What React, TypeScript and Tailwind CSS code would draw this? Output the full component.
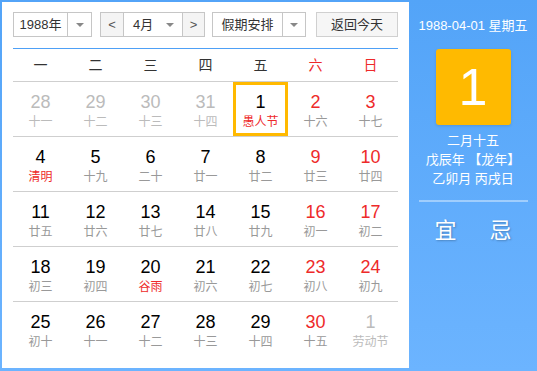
import React from "react";

type Day = {
  d: number;
  l: string;
  other?: boolean;
  red?: boolean;
  fest?: boolean;
  sel?: boolean;
};

const weekdays = ["一", "二", "三", "四", "五", "六", "日"];

const weeks: Day[][] = [
  [
    { d: 28, l: "十一", other: true },
    { d: 29, l: "十二", other: true },
    { d: 30, l: "十三", other: true },
    { d: 31, l: "十四", other: true },
    { d: 1, l: "愚人节", fest: true, sel: true },
    { d: 2, l: "十六", red: true },
    { d: 3, l: "十七", red: true },
  ],
  [
    { d: 4, l: "清明", fest: true },
    { d: 5, l: "十九" },
    { d: 6, l: "二十" },
    { d: 7, l: "廿一" },
    { d: 8, l: "廿二" },
    { d: 9, l: "廿三", red: true },
    { d: 10, l: "廿四", red: true },
  ],
  [
    { d: 11, l: "廿五" },
    { d: 12, l: "廿六" },
    { d: 13, l: "廿七" },
    { d: 14, l: "廿八" },
    { d: 15, l: "廿九" },
    { d: 16, l: "初一", red: true },
    { d: 17, l: "初二", red: true },
  ],
  [
    { d: 18, l: "初三" },
    { d: 19, l: "初四" },
    { d: 20, l: "谷雨", fest: true },
    { d: 21, l: "初六" },
    { d: 22, l: "初七" },
    { d: 23, l: "初八", red: true },
    { d: 24, l: "初九", red: true },
  ],
  [
    { d: 25, l: "初十" },
    { d: 26, l: "十一" },
    { d: 27, l: "十二" },
    { d: 28, l: "十三" },
    { d: 29, l: "十四" },
    { d: 30, l: "十五", red: true },
    { d: 1, l: "劳动节", other: true },
  ],
];

const Caret = () => (
  <span className="block w-0 h-0 border-l-[4px] border-r-[4px] border-t-[4px] border-l-transparent border-r-transparent border-t-[#888]" />
);

const Calendar: React.FC = () => {
  return (
    <div
      className="w-[537px] h-[371px] flex pt-[2px] pb-[3px] pl-[2px] bg-gradient-to-b from-[#53a4f8] to-[#6cb4ff] text-[#333]"
      style={{ fontFamily: '"Liberation Sans", "Noto Sans CJK SC", sans-serif' }}
    >
      {/* left: month grid */}
      <div className="w-[407px] h-full bg-white pl-[11px] pr-[11px] pt-[10px]">
        <div className="flex items-center h-[25px] text-[13px]">
          <div className="flex h-full w-[79px] border border-[#c6c6c6]">
            <div className="flex-1 flex items-center justify-center">1988年</div>
            <div className="w-[24px] flex items-center justify-center border-l border-[#c6c6c6]">
              <Caret />
            </div>
          </div>
          <div className="flex h-full w-[105px] ml-[8px] border border-[#c6c6c6]">
            <div className="w-[23px] flex items-center justify-center bg-[#f4f4f4] border-r border-[#c6c6c6] text-[#555]">
              &lt;
            </div>
            <div className="flex-1 flex items-center pl-[9px] pr-[8px] justify-between">
              <span>4月</span>
              <Caret />
            </div>
            <div className="w-[22px] flex items-center justify-center bg-[#f4f4f4] border-l border-[#c6c6c6] text-[#555]">
              &gt;
            </div>
          </div>
          <div className="flex h-full w-[94px] ml-[7px] border border-[#c6c6c6]">
            <div className="flex-1 flex items-center justify-center">假期安排</div>
            <div className="w-[23px] flex items-center justify-center border-l border-[#c6c6c6]">
              <Caret />
            </div>
          </div>
          <div className="flex h-full w-[82px] ml-auto items-center justify-center border border-[#d0d0d0] bg-[#f6f6f6]">
            返回今天
          </div>
        </div>

        <div className="mt-[11px] h-px bg-[#4ea0f6]" />

        <div className="grid grid-cols-7 h-[33px] items-center text-[14px] border-b border-[#cfcfcf]">
          {weekdays.map((w, i) => (
            <div key={w} className={`text-center ${i >= 5 ? "text-[#ee2a2a]" : "text-[#333]"}`}>
              {w}
            </div>
          ))}
        </div>

        {weeks.map((wk, r) => (
          <div
            key={r}
            className={`grid grid-cols-7 h-[55px] ${r < 4 ? "border-b border-[#cfcfcf]" : ""}`}
          >
            {wk.map((c, i) => {
              const num = c.other ? "text-[#bbbbbb]" : c.red ? "text-[#ee2a2a]" : "text-black";
              const lun = c.other ? "text-[#bbbbbb]" : c.fest ? "text-[#ee2a2a]" : "text-[#999]";
              return (
                <div
                  key={i}
                  className={`flex flex-col items-center ${c.sel ? "border-[3px] border-[#ffb900] pt-[7px]" : "pt-[10px]"}`}
                >
                  <span className={`text-[18px] leading-[20px] ${num}`}>{c.d}</span>
                  <span className={`mt-[2px] text-[12px] leading-[16px] ${lun}`}>{c.l}</span>
                </div>
              );
            })}
          </div>
        ))}
      </div>

      {/* right: day detail */}
      <div className="flex-1 flex flex-col items-center text-white pt-[14px]">
        <div className="text-[13px] leading-[20px]">1988-04-01 星期五</div>
        <div className="mt-[13px] w-[75px] h-[76px] rounded-[3px] bg-[#ffba00] flex items-center justify-center text-[52px] leading-none shadow-[0_1px_3px_rgba(0,0,0,0.12)]">
          1
        </div>
        <div className="mt-[6px] text-[13px] leading-[19px] text-center">
          <div>二月十五</div>
          <div>戊辰年 【龙年】</div>
          <div>乙卯月 丙戌日</div>
        </div>
        <div className="mt-[12px] h-[2px] w-[109px] bg-white/40" />
        <div className="mt-[16px] flex gap-[33px] text-[22px] leading-[26px] [text-shadow:1px_1px_2px_rgba(0,0,0,0.25)]">
          <span>宜</span>
          <span>忌</span>
        </div>
      </div>
    </div>
  );
};

export default function App() {
  return <Calendar />;
}
